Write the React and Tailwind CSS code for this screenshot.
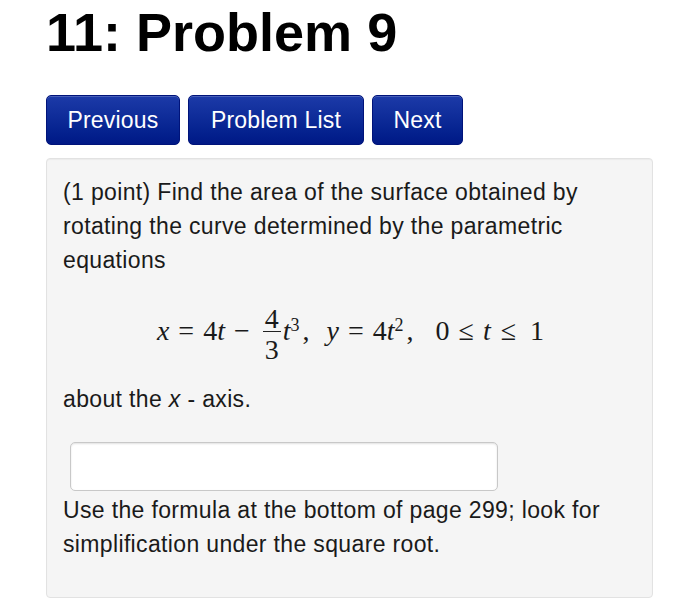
const sans = { fontFamily: '"Liberation Sans", Arial, sans-serif' }

const NavButton = ({ children, width }) => (
  <button
    type="button"
    className={`h-[50px] rounded-[5px] border border-[#00137a] bg-gradient-to-b from-[#1c3aa8] to-[#001886] text-[23px] tracking-[0.2px] text-white shadow-[inset_0_1px_0_rgba(255,255,255,0.2)] ${width}`}
  >
    {children}
  </button>
)

const Frac = ({ top, bottom }) => (
  <span className="ml-[4px] mr-[2px] inline-flex w-[18px] flex-col items-center">
    <span className="block h-[33px] pt-[7px] leading-[28px]">{top}</span>
    <span className="h-px w-[18px] bg-[#222]" />
    <span className="block h-[32px] pt-[4px] leading-[28px]">{bottom}</span>
  </span>
)

const Formula = () => (
  <div
    className="flex h-[105px] items-center justify-center pt-[3px] text-[28px] tracking-normal text-[#1a1a1a]"
    style={{ fontFamily: '"Liberation Serif", "Times New Roman", serif' }}
  >
    <span className="inline-flex items-center whitespace-nowrap">
      <span>
        <i>x</i>
        <span className="mx-[9px]">=</span>4<i>t</i>
        <span className="mx-[9px]">−</span>
      </span>
      <Frac top="4" bottom="3" />
      <span>
        <i>t</i>
        <sup className="text-[18px]">3</sup>
        <span className="ml-[3px] mr-[17px]">,</span>
        <i>y</i>
        <span className="mx-[9px]">=</span>4<i>t</i>
        <sup className="text-[18px]">2</sup>
        <span className="ml-[3px] mr-[22px]">,</span>0
        <span className="mx-[9px]">≤</span>
        <i>t</i>
        <span className="ml-[10px] mr-[14px]">≤</span>1
      </span>
    </span>
  </div>
)

export default function App() {
  return (
    <div className="min-h-[616px] bg-white pl-[46px] text-[#1a1a1a]" style={sans}>
      <h1 className="text-[54px] font-bold leading-[1.2] text-black">11: Problem 9</h1>

      <div className="mt-[30px] flex gap-[8px]">
        <NavButton width="w-[134px]">Previous</NavButton>
        <NavButton width="w-[176px]">Problem List</NavButton>
        <NavButton width="w-[91px]">Next</NavButton>
      </div>

      <div className="mt-[13px] w-[607px] rounded-[4px] border border-[#e2e2e2] bg-[#f5f5f5] pb-[36px] pl-[16px] pr-[14px] pt-[16px] text-[23px] leading-[34px] tracking-[0.35px] shadow-[inset_0_1px_1px_rgba(0,0,0,0.04)]">
        <p>
          (1 point) Find the area of the surface obtained by rotating the curve determined by the
          parametric equations
        </p>

        <Formula />

        <p>
          about the <i>x</i> - axis.
        </p>

        <input
          type="text"
          className="ml-[7px] mt-[26px] block h-[49px] w-[428px] rounded-[5px] border border-[#c8c8c8] bg-white shadow-[inset_0_1px_2px_rgba(0,0,0,0.12)] outline-none"
        />

        <p className="mt-[2px]">
          Use the formula at the bottom of page 299; look for simplification under the square root.
        </p>
      </div>
    </div>
  )
}
